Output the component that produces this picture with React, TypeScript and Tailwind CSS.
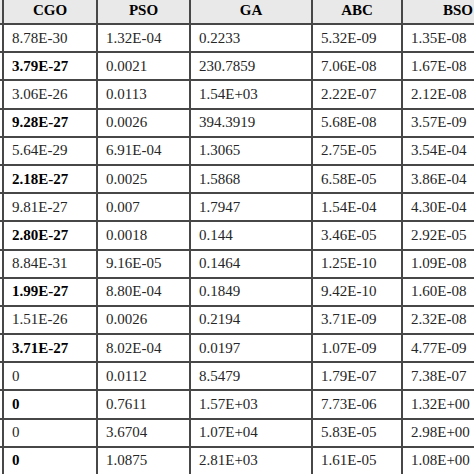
const headers = ['CGO', 'PSO', 'GA', 'ABC', 'BSO']

const rows: string[][] = [
  ['8.78E-30', '1.32E-04', '0.2233', '5.32E-09', '1.35E-08'],
  ['3.79E-27', '0.0021', '230.7859', '7.06E-08', '1.67E-08'],
  ['3.06E-26', '0.0113', '1.54E+03', '2.22E-07', '2.12E-08'],
  ['9.28E-27', '0.0026', '394.3919', '5.68E-08', '3.57E-09'],
  ['5.64E-29', '6.91E-04', '1.3065', '2.75E-05', '3.54E-04'],
  ['2.18E-27', '0.0025', '1.5868', '6.58E-05', '3.86E-04'],
  ['9.81E-27', '0.007', '1.7947', '1.54E-04', '4.30E-04'],
  ['2.80E-27', '0.0018', '0.144', '3.46E-05', '2.92E-05'],
  ['8.84E-31', '9.16E-05', '0.1464', '1.25E-10', '1.09E-08'],
  ['1.99E-27', '8.80E-04', '0.1849', '9.42E-10', '1.60E-08'],
  ['1.51E-26', '0.0026', '0.2194', '3.71E-09', '2.32E-08'],
  ['3.71E-27', '8.02E-04', '0.0197', '1.07E-09', '4.77E-09'],
  ['0', '0.0112', '8.5479', '1.79E-07', '7.38E-07'],
  ['0', '0.7611', '1.57E+03', '7.73E-06', '1.32E+00'],
  ['0', '3.6704', '1.07E+04', '5.83E-05', '2.98E+00'],
  ['0', '1.0875', '2.81E+03', '1.61E-05', '1.08E+00'],
]

// widths of the visible columns (the first one is mostly off screen)
const widths = ['w-[94px]', 'w-[93px]', 'w-[122px]', 'w-[90px]', 'w-[112px]']

export default function App() {
  return (
    <div className="w-[474px] h-[474px] overflow-hidden bg-white font-['Liberation_Serif',serif] text-[15px]">
      <div className="flex flex-col ml-[-56px] w-[600px]">
        {/* header */}
        <div className="flex h-[25px] bg-[#e9e9e9] border-b-2 border-[#474747]">
          <div className="w-[60px] shrink-0 border-r-2 border-[#474747]" />
          {headers.map((h, i) => (
            <div
              key={h}
              className={`${widths[i]} shrink-0 border-r-2 border-[#474747] flex items-center justify-center font-bold text-black leading-none pb-[3px]`}
            >
              {h}
            </div>
          ))}
        </div>

        {rows.map((row, r) => (
          <div key={r} className="flex h-[28.2px] border-b-2 border-[#474747] bg-white">
            <div className="w-[60px] shrink-0 border-r-2 border-[#474747]" />
            {row.map((v, c) => (
              <div
                key={c}
                className={`${widths[c]} shrink-0 border-r-2 border-[#474747] flex items-center pl-2 text-[#262626] leading-none ${
                  c === 0 && r % 2 === 1 ? 'font-bold text-black' : ''
                }`}
              >
                {v}
              </div>
            ))}
          </div>
        ))}
      </div>
    </div>
  )
}
